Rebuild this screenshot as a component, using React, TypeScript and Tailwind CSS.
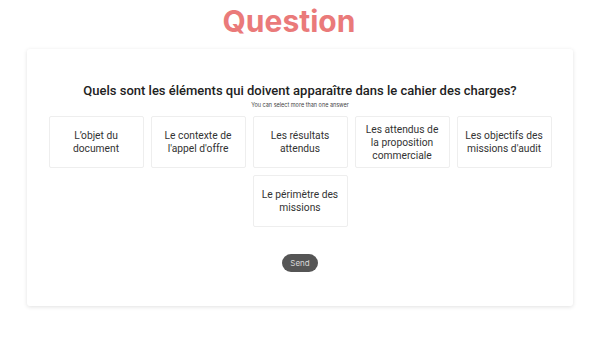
import React from "react";

const options = [
  "L’objet du document",
  "Le contexte de l'appel d'offre",
  "Les résultats attendus",
  "Les attendus de la proposition commerciale",
  "Les objectifs des missions d'audit",
  "Le périmètre des missions",
];

export default function App() {
  return (
    <div className="w-[600px] h-[338px] bg-white flex flex-col items-center" style={{ fontFamily: "Inter, 'Noto Sans', sans-serif" }}>
      <h1 className="text-[30px] leading-[42px] font-bold text-[#ea7a7a] mt-[0px] ml-[-22px]">Question</h1>
      <div className="mt-[7px] w-[546px] h-[257px] bg-white rounded-[3px] shadow-[0_1px_4px_rgba(0,0,0,0.12)] flex flex-col items-center pt-[33px]">
        <h2 className="text-[13px] leading-[18px] font-medium text-[#222]" style={{ fontFamily: "Roboto, sans-serif" }}>Quels sont les éléments qui doivent apparaître dans le cahier des charges?</h2>
        <p className="text-[5.5px] leading-[8px] text-[#444] mt-[1px]">You can select more than one answer</p>
        <div className="mt-[7px] w-[504px] flex flex-wrap justify-center gap-[7px]" style={{ fontFamily: "Roboto, sans-serif" }}>
          {options.map((o) => (
            <div key={o} className="w-[95px] h-[52px] border border-[#eeeeee] rounded-[2px] flex items-center justify-center text-center px-[6px] text-[10.25px] leading-[13px] text-[#333]">
              {o}
            </div>
          ))}
        </div>
        <button className="mt-[27px] w-[36px] h-[18px] rounded-full bg-[#555555] text-[#d8d8d8] text-[8px] leading-[18px]">Send</button>
      </div>
    </div>
  );
}
